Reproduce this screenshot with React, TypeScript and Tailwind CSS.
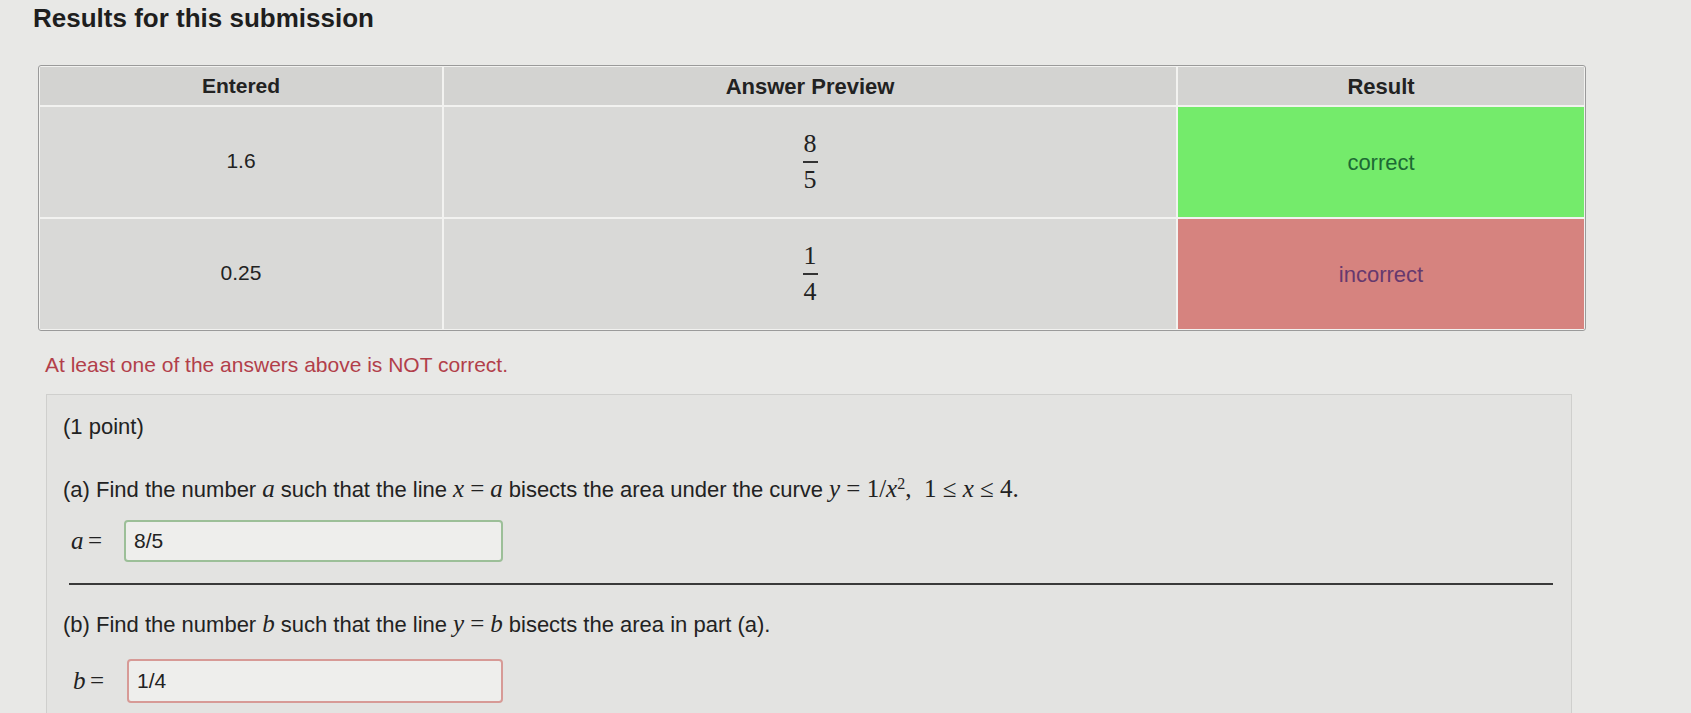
import React from "react";

function Frac({ n, d }: { n: string; d: string }) {
  return (
    <span className="inline-flex flex-col items-center font-['Liberation_Serif',serif] text-[26px] leading-[28px] text-[#222]">
      <span>{n}</span>
      <span className="block w-[15px] h-[2px] bg-[#333] my-[3px]" />
      <span>{d}</span>
    </span>
  );
}

const M = ({ children }: { children: React.ReactNode }) => (
  <span className="font-['Liberation_Serif',serif] italic text-[25px]">{children}</span>
);
const R = ({ children }: { children: React.ReactNode }) => (
  <span className="font-['Liberation_Serif',serif] text-[25px]">{children}</span>
);

export default function App() {
  return (
    <div className="w-[1691px] h-[713px] overflow-hidden bg-[#e8e8e6] font-['Liberation_Sans',Arial,sans-serif] text-[#222]">
      <div className="pl-[33px] pt-[3px]">
        <h1 className="text-[26px] font-bold leading-[30px] text-[#1e1e1e]">Results for this submission</h1>
      </div>

      <div className="ml-[38px] mt-[32px] w-[1548px] border border-[#9a9a9a] rounded-[3px] bg-[#f2f2f0] p-[1px]">
        <div className="grid grid-cols-[402px_732px_1fr] gap-[2px]">
          <div className="h-[38px] bg-[#d3d3d1] flex items-center justify-center font-bold text-[21px]">Entered</div>
          <div className="h-[38px] bg-[#d3d3d1] flex items-center justify-center font-bold text-[22px]">Answer Preview</div>
          <div className="h-[38px] bg-[#d3d3d1] flex items-center justify-center font-bold text-[22px]">Result</div>

          <div className="h-[110px] bg-[#d9d9d7] flex items-start justify-center pt-[38px] text-[21px]">1.6</div>
          <div className="h-[110px] bg-[#d9d9d7] flex items-center justify-center">
            <Frac n="8" d="5" />
          </div>
          <div className="h-[110px] bg-[#74eb6b] flex items-center justify-center text-[22px] text-[#1c6a34]">correct</div>

          <div className="h-[110px] bg-[#d9d9d7] flex items-start justify-center pt-[38px] text-[21px]">0.25</div>
          <div className="h-[110px] bg-[#d9d9d7] flex items-center justify-center">
            <Frac n="1" d="4" />
          </div>
          <div className="h-[110px] bg-[#d6837f] flex items-center justify-center text-[22px] text-[#66396e]">incorrect</div>
        </div>
      </div>

      <p className="ml-[45px] mt-[21px] text-[21px] leading-[26px] text-[#b23f4a]">At least one of the answers above is NOT correct.</p>

      <div className="ml-[46px] mt-[16px] w-[1526px] h-[400px] bg-[#e3e3e1] border border-[#cfcfcd] pl-[16px] pt-[19px]">
        <p className="text-[22px] leading-[26px]">(1 point)</p>
        <p className="mt-[36px] text-[22px] leading-[26px] flex items-baseline gap-[6px]">
          <span>(a) Find the number</span> <M>a</M> <span>such that the line</span> <M>x</M> <R>=</R> <M>a</M>
          <span>bisects the area under the curve</span>
          <span>
            <M>y</M> <R>= 1/</R><M>x</M><sup className="font-['Liberation_Serif',serif] text-[16px]">2</sup><R>,&nbsp;&nbsp;1 ≤ </R><M>x</M><R> ≤ 4.</R>
          </span>
        </p>
        <div className="mt-[17px] ml-[8px] flex items-center gap-[8px]">
          <span className="w-[45px]"><M>a</M> <R>=</R></span>
          <div className="w-[379px] h-[42px] rounded-[4px] border-2 border-[#9cbf98] bg-[#eeeeec] flex items-center pl-[8px] text-[21px]">8/5</div>
        </div>
        <div className="mt-[21px] ml-[6px] w-[1484px] h-[2px] bg-[#3a3a3a]" />
        <p className="mt-[26px] text-[22px] leading-[26px] flex items-baseline gap-[6px]">
          <span>(b) Find the number</span> <M>b</M> <span>such that the line</span> <M>y</M> <R>=</R> <M>b</M>
          <span>bisects the area in part (a).</span>
        </p>
        <div className="mt-[21px] ml-[10px] flex items-center gap-[8px]">
          <span className="w-[46px]"><M>b</M> <R>=</R></span>
          <div className="w-[376px] h-[44px] rounded-[4px] border-2 border-[#d79a96] bg-[#eeeeec] flex items-center pl-[8px] text-[21px]">1/4</div>
        </div>
      </div>
    </div>
  );
}
